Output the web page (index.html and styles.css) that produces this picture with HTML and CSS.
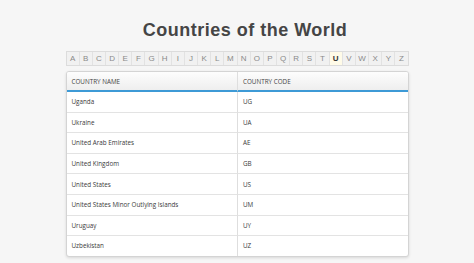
FILE: index.html
```html
<!DOCTYPE html>
<html lang="en">
<head>
    <meta charset="utf-8" />
    <title>Countries of the World</title>
    <link rel="stylesheet" href="styles.css">
</head>
<body>
<div class="page">
    <h1 class="title">Countries of the World</h1>

    <ul class="letters">
        <li>A</li><li>B</li><li>C</li><li>D</li><li>E</li><li>F</li><li>G</li>
        <li>H</li><li>I</li><li>J</li><li>K</li><li>L</li><li>M</li><li>N</li>
        <li>O</li><li>P</li><li>Q</li><li>R</li><li>S</li><li>T</li>
        <li class="active">U</li>
        <li>V</li><li>W</li><li>X</li><li>Y</li><li>Z</li>
    </ul>

    <table class="countries">
        <thead>
        <tr>
            <th>Country Name</th>
            <th>Country Code</th>
        </tr>
        </thead>
        <tbody>
        <tr><td>Uganda</td><td>UG</td></tr>
        <tr><td>Ukraine</td><td>UA</td></tr>
        <tr><td>United Arab Emirates</td><td>AE</td></tr>
        <tr><td>United Kingdom</td><td>GB</td></tr>
        <tr><td>United States</td><td>US</td></tr>
        <tr><td>United States Minor Outlying Islands</td><td>UM</td></tr>
        <tr><td>Uruguay</td><td>UY</td></tr>
        <tr><td>Uzbekistan</td><td>UZ</td></tr>
        </tbody>
    </table>
</div>
</body>
</html>
```

FILE: styles.css
```css
body {
    margin: 0;
    height: 100vh;
    overflow: hidden;
    background: #f6f6f6;
    font-family: "Open Sans", "DejaVu Sans", sans-serif;
    color: #444;
}

.page {
    width: 343px;
    margin: 0 auto;
    padding-top: 19px;
}

.title {
    margin: 0 0 9px;
    padding-left: 16px;
    font-family: "Liberation Sans", Arial, sans-serif;
    font-size: 18px;
    line-height: 23px;
    letter-spacing: 0.5px;
    font-weight: bold;
    text-align: center;
    color: #454545;
}

.letters {
    display: flex;
    margin: 0 0 5px;
    padding: 0;
    list-style: none;
    height: 13px;
    border: 1px solid #dcdcdc;
    background: #f1f1f1;
}
.letters li {
    flex: 1;
    display: flex;
    align-items: center;
    justify-content: center;
    font-family: "Liberation Sans", Arial, sans-serif;
    font-size: 8px;
    color: #8a8a8a;
    border-left: 1px solid #e2e2e2;
}
.letters li:first-child {
    border-left: 0;
}
.letters li.active {
    background: #fffbe8;
    color: #333;
    font-weight: bold;
}

.countries {
    width: 100%;
    border-collapse: separate;
    border-spacing: 0;
    table-layout: fixed;
    background: #fff;
    border: 1px solid #d4d4d4;
    border-radius: 3px;
    box-shadow: 0 1px 3px rgba(0,0,0,0.12);
    overflow: hidden;
}
.countries th,
.countries td {
    text-align: left;
    padding: 0 5px;
    font-size: 6.3px;
}
.countries th {
    height: 18px;
    font-weight: normal;
    text-transform: uppercase;
    color: #444;
    background: linear-gradient(#fdfdfd, #eeeeee);
    border-bottom: 2px solid #3d9ad6;
}
.countries td {
    height: 19.6px;
    color: #3a3a3a;
    border-top: 1px solid #e3e3e3;
}
.countries tbody tr:first-child td {
    border-top: 0;
}
.countries th + th,
.countries td + td {
    border-left: 1px solid #dedede;
}
```
